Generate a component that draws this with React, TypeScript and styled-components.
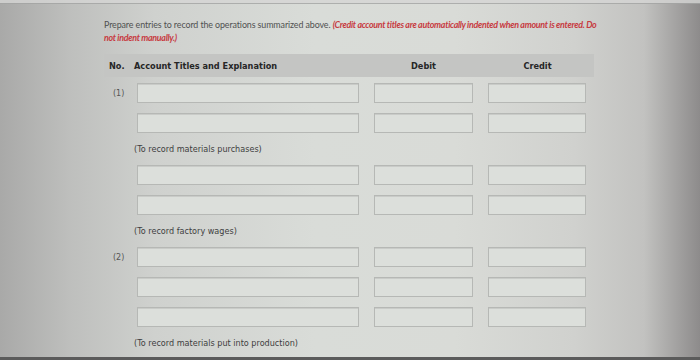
import React from "react";
import styled, { createGlobalStyle } from "styled-components";

const GlobalStyle = createGlobalStyle`
  html, body {
    margin: 0;
    padding: 0;
  }
  body {
    font-family: "DejaVu Sans", Verdana, sans-serif;
  }
`;

const Screen = styled.div`
  width: 700px;
  height: 360px;
  overflow: hidden;
  display: flex;
  flex-direction: column;
  background: linear-gradient(
    to right,
    #a9a9a8 0%,
    #bebfbd 10%,
    #cfd1ce 22%,
    #d9dcd8 45%,
    #d9dbd7 65%,
    #d0d1ce 82%,
    #c2c2c0 92%,
    #8d8b8b 100%
  );
`;

const TopEdge = styled.div`
  height: 3px;
  flex: none;
  background: #d6d6d5;
  border-bottom: 1px solid #a3a4a3;
  opacity: 0.8;
`;

const BottomEdge = styled.div`
  margin-top: auto;
  height: 3px;
  flex: none;
  background: #5b5b5b;
`;

const Content = styled.div`
  padding: 14px 0 0 104px;
  width: 500px;
`;

const Instructions = styled.p`
  margin: 0;
  font-family: Lato, "Liberation Sans", sans-serif;
  font-size: 8.9px;
  line-height: 13px;
  color: #505151;
  letter-spacing: -0.1px;
`;

const Hint = styled.span`
  color: #c73a3f;
  font-style: italic;
  font-weight: 700;
  letter-spacing: -0.3px;
`;

const Table = styled.div`
  margin-top: 10px;
  width: 490px;
`;

const HeaderBar = styled.div`
  display: grid;
  grid-template-columns: 15px 225px 99px 99px;
  column-gap: 15px;
  height: 23px;
  align-items: center;
  background: #c4c5c3;
  font-size: 8.2px;
  font-weight: 700;
  color: #262626;
`;

const HeadCell = styled.div<{ $center?: boolean; $first?: boolean }>`
  text-align: ${(p) => (p.$center ? "center" : "left")};
  padding-left: ${(p) => (p.$first ? 5 : 0)}px;
  white-space: nowrap;
`;

const Body = styled.div`
  display: flex;
  flex-direction: column;
  gap: 10px;
  padding-top: 6px;
`;

const Row = styled.div`
  display: grid;
  grid-template-columns: 18px 222px 99px 98px;
  column-gap: 15px;
  height: 20px;
  align-items: center;
`;

const EntryNo = styled.div`
  padding-left: 9px;
  font-size: 8px;
  color: #555;
  white-space: nowrap;
`;

const Field = styled.div`
  height: 20px;
  box-sizing: border-box;
  border: 1px solid #b6b8b5;
  background: #dcdfdb;
  box-shadow: inset 0 1px 0 #c9cbc8;
`;

const Note = styled.div`
  height: 12px;
  line-height: 12px;
  padding-left: 30px;
  font-size: 8.1px;
  color: #3e3e3e;
  white-space: nowrap;
`;

type Line = { kind: "row"; no?: string } | { kind: "note"; text: string };

const lines: Line[] = [
  { kind: "row", no: "(1)" },
  { kind: "row" },
  { kind: "note", text: "(To record materials purchases)" },
  { kind: "row" },
  { kind: "row" },
  { kind: "note", text: "(To record factory wages)" },
  { kind: "row", no: "(2)" },
  { kind: "row" },
  { kind: "row" },
  { kind: "note", text: "(To record materials put into production)" },
];

const App: React.FC = () => {
  return (
    <Screen>
      <GlobalStyle />
      <TopEdge />
      <Content>
        <Instructions>
          Prepare entries to record the operations summarized above.{" "}
          <Hint>
            (Credit account titles are automatically indented when amount is entered. Do not
            indent manually.)
          </Hint>
        </Instructions>
        <Table>
          <HeaderBar>
            <HeadCell $first>No.</HeadCell>
            <HeadCell>Account Titles and Explanation</HeadCell>
            <HeadCell $center>Debit</HeadCell>
            <HeadCell $center>Credit</HeadCell>
          </HeaderBar>
          <Body>
            {lines.map((line, i) =>
              line.kind === "note" ? (
                <Note key={i}>{line.text}</Note>
              ) : (
                <Row key={i}>
                  <EntryNo>{line.no}</EntryNo>
                  <Field />
                  <Field />
                  <Field />
                </Row>
              )
            )}
          </Body>
        </Table>
      </Content>
      <BottomEdge />
    </Screen>
  );
};

export default App;
